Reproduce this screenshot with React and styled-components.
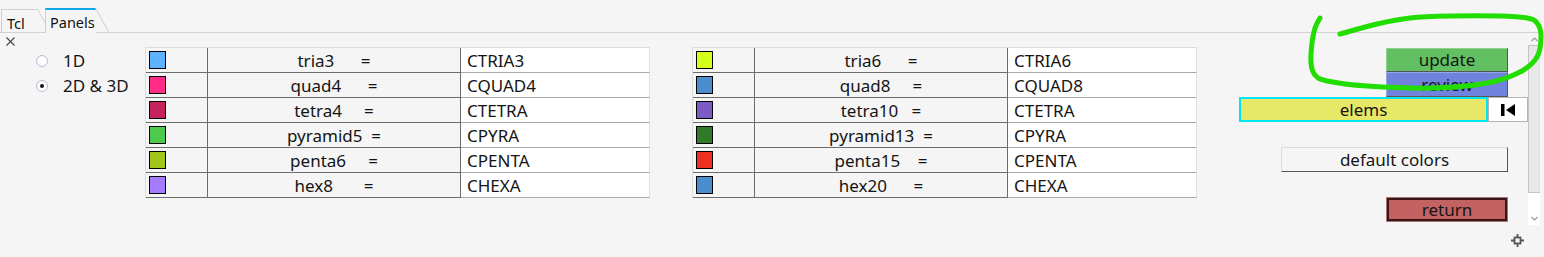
import React from "react";
import styled, { createGlobalStyle } from "styled-components";

const Global = createGlobalStyle`
  html, body { margin: 0; padding: 0; background: #f5f5f5; }
  body { font-family: "Noto Sans", "Open Sans", sans-serif; color: #141414; }
  * { box-sizing: border-box; }
`;

const FS = 17;

const Page = styled.div`
  position: relative;
  width: 1544px;
  height: 257px;
  background: #f5f5f5;
  display: flex;
  flex-direction: column;
  overflow: hidden;
`;

const TabBar = styled.div`
  height: 33px;
  border-bottom: 1px solid #d2d2d2;
  display: flex;
  align-items: flex-end;
  padding-left: 1px;
`;

const Tab = styled.div`
  position: relative;
  height: ${(p) => (p.$active ? 25 : 23)}px;
  margin-bottom: ${(p) => (p.$active ? -1 : 0)}px;
  width: ${(p) => p.$w}px;
  margin-right: ${(p) => p.$gap}px;
  border-left: 1px solid #cfcfcf;
  border-top: ${(p) => (p.$active ? "2px solid #12a6e6" : "1px solid #cfcfcf")};
  background: #f5f5f5;
  font-size: 14.5px;
  line-height: 1;
  padding: ${(p) => (p.$active ? "5px 0 0 4px" : "6px 0 0 5px")};
  color: #111;
  &::after {
    content: "";
    position: absolute;
    top: ${(p) => (p.$active ? -2 : -1)}px;
    right: 0;
    width: 1px;
    height: calc(100% + ${(p) => (p.$active ? 2 : 1)}px);
    background: #cfcfcf;
    transform-origin: top left;
    transform: skewX(29deg);
  }
`;

const Body = styled.div`
  display: flex;
  align-items: flex-start;
`;

const Main = styled.div`
  width: 1528px;
  display: flex;
  flex-direction: column;
`;

const CloseRow = styled.div`
  height: 14px;
  padding: 4px 0 0 6px;
  display: flex;
`;

const PanelRow = styled.div`
  display: flex;
  align-items: flex-start;
  padding-left: 36px;
`;

const Radios = styled.div`
  width: 110px;
  padding-top: 1px;
  display: flex;
  flex-direction: column;
`;

const RadioRow = styled.div`
  height: 25px;
  display: flex;
  align-items: center;
  gap: 15px;
  font-size: ${FS}px;
`;

const RadioCircle = styled.span`
  width: 12px;
  height: 12px;
  border-radius: 50%;
  border: 1px solid #b9bdd6;
  background: radial-gradient(circle at 60% 60%, #ffffff 55%, #e6e8f4 100%);
  display: flex;
  align-items: center;
  justify-content: center;
  &::after {
    content: "";
    width: 4px;
    height: 4px;
    border-radius: 50%;
    background: ${(p) => (p.$checked ? "#111" : "transparent")};
  }
`;

const Table = styled.div`
  width: 505px;
  margin-right: ${(p) => p.$gap}px;
  border-top: 1px solid #dcdcdc;
  border-left: 1px solid #dcdcdc;
  display: flex;
  flex-direction: column;
`;

const Row = styled.div`
  display: grid;
  grid-template-columns: 62px 253px 189px;
  height: 25px;
`;

const ColorCell = styled.div`
  border-right: 1px solid #6c6c6c;
  border-bottom: 1px solid #6c6c6c;
  display: flex;
  align-items: center;
  padding-left: 3px;
`;

const Swatch = styled.span`
  width: 17px;
  height: 18px;
  border: 1px solid #000;
  background: ${(p) => p.$c};
`;

const LabelCell = styled.div`
  border-right: 1px solid #6c6c6c;
  border-bottom: 1px solid #6c6c6c;
  display: flex;
  align-items: center;
  justify-content: center;
  white-space: pre;
  font-size: ${FS}px;
`;

const ValueCell = styled.div`
  background: #fff;
  border-bottom: 1px solid #a9a9a9;
  border-right: 1px solid #e2e2e2;
  display: flex;
  align-items: center;
  padding-left: 6px;
  font-size: ${FS}px;
`;

const RightPanel = styled.div`
  width: 290px;
  padding-top: 1px;
  display: grid;
  grid-template-rows: 24px 25px 25px 25px 25px 25px 25px;
`;

const BtnRow = styled.div`
  display: flex;
  justify-content: ${(p) => (p.$full ? "flex-start" : "flex-end")};
  padding-right: ${(p) => (p.$full ? 0 : 20)}px;
  align-items: stretch;
`;

const Button = styled.div`
  width: ${(p) => p.$w}px;
  background: ${(p) => p.$bg};
  border: 1px solid;
  border-color: ${(p) => p.$light} #555 #555 ${(p) => p.$light};
  display: flex;
  align-items: center;
  justify-content: center;
  font-size: ${FS}px;
  color: #151515;
  padding-bottom: 1px;
`;

const ElemsButton = styled.div`
  width: 249px;
  background: #e8e868;
  border: 2px solid #00e6f0;
  display: flex;
  align-items: center;
  justify-content: center;
  font-size: ${FS}px;
  color: #151515;
`;

const IconButton = styled.div`
  width: 40px;
  background: #fff;
  border: 1px solid #b4b4b4;
  display: flex;
  align-items: center;
  justify-content: center;
`;

const ReturnButton = styled.div`
  width: 122px;
  background: #c26262;
  border: 1px solid #a77676;
  box-shadow: inset 0 0 0 2px #3a1515;
  display: flex;
  align-items: center;
  justify-content: center;
  font-size: ${FS}px;
  color: #151515;
`;

const Scrollbar = styled.div`
  width: 12px;
  margin-top: 4px;
  display: flex;
  flex-direction: column;
`;

const ScrollArrow = styled.div`
  height: ${(p) => p.$h}px;
  display: flex;
  justify-content: center;
  align-items: ${(p) => (p.$down ? "flex-end" : "flex-start")};
  padding-bottom: ${(p) => (p.$down ? 4 : 0)}px;
  background: ${(p) => (p.$down ? "#fff" : "transparent")};
`;

const Thumb = styled.div`
  height: 148px;
  background: #e8e8e8;
  border: 1px solid #c4c4c4;
  border-right-color: #e0e0e0;
`;

const Footer = styled.div`
  display: flex;
  justify-content: flex-end;
  padding: 9px 20px 0 0;
`;

const Overlay = styled.svg`
  position: absolute;
  left: 0;
  top: 0;
  pointer-events: none;
`;

const left = [
  ["#5cb3ff", "tria3      =", "CTRIA3"],
  ["#ff2d85", "quad4      =", "CQUAD4"],
  ["#c4235e", "tetra4     =", "CTETRA"],
  ["#4dc94d", "pyramid5  =", "CPYRA"],
  ["#a3c41a", "penta6     =", "CPENTA"],
  ["#a57cff", "hex8       =", "CHEXA"],
];

const right = [
  ["#d4ff1a", "tria6      =", "CTRIA6"],
  ["#4a8ccc", "quad8     =", "CQUAD8"],
  ["#7c5cc4", "tetra10   =", "CTETRA"],
  ["#317a2a", "pyramid13  =", "CPYRA"],
  ["#ee3020", "penta15    =", "CPENTA"],
  ["#4a8ccc", "hex20      =", "CHEXA"],
];

function ElemTable({ rows, gap }) {
  return (
    <Table $gap={gap}>
      {rows.map(([c, l, v], i) => (
        <Row key={i}>
          <ColorCell>
            <Swatch $c={c} />
          </ColorCell>
          <LabelCell>{l}</LabelCell>
          <ValueCell>{v}</ValueCell>
        </Row>
      ))}
    </Table>
  );
}

const pts = [
  [1320, 18], [1315, 28], [1312, 43], [1311, 63], [1315, 75], [1327, 81],
  [1367, 86], [1433, 88], [1487, 83], [1520, 72], [1537, 57], [1541, 36],
  [1537, 23], [1527, 18], [1500, 16], [1450, 16], [1410, 18], [1377, 24], [1340, 34],
];

function smooth(p) {
  let d = `M${p[0][0]},${p[0][1]}`;
  for (let i = 0; i < p.length - 1; i++) {
    const p0 = p[i - 1] || p[i];
    const p1 = p[i];
    const p2 = p[i + 1];
    const p3 = p[i + 2] || p2;
    const c1 = [p1[0] + (p2[0] - p0[0]) / 6, p1[1] + (p2[1] - p0[1]) / 6];
    const c2 = [p2[0] - (p3[0] - p1[0]) / 6, p2[1] - (p3[1] - p1[1]) / 6];
    d += ` C${c1[0]},${c1[1]} ${c2[0]},${c2[1]} ${p2[0]},${p2[1]}`;
  }
  return d;
}

export default function App() {
  return (
    <Page>
      <Global />
      <TabBar>
        <Tab $w={37} $gap={7}>Tcl</Tab>
        <Tab $w={51} $gap={0} $active>Panels</Tab>
      </TabBar>
      <Body>
        <Main>
          <CloseRow>
            <svg width="9" height="9" viewBox="0 0 9 9">
              <path d="M0.5 0.5 L8.5 8.5 M8.5 0.5 L0.5 8.5" stroke="#444" strokeWidth="1.1" />
            </svg>
          </CloseRow>
          <PanelRow>
            <Radios>
              <RadioRow>
                <RadioCircle />
                1D
              </RadioRow>
              <RadioRow>
                <RadioCircle $checked />
                2D &amp; 3D
              </RadioRow>
            </Radios>
            <ElemTable rows={left} gap={42} />
            <ElemTable rows={right} gap={42} />
            <RightPanel>
              <BtnRow>
                <Button $w={122} $bg="#62c062" $light="#8fd08f">update</Button>
              </BtnRow>
              <BtnRow>
                <Button $w={122} $bg="#6f82dc" $light="#98a6e6">review</Button>
              </BtnRow>
              <BtnRow $full>
                <ElemsButton>elems</ElemsButton>
                <IconButton>
                  <svg width="14" height="12" viewBox="0 0 14 12">
                    <rect x="0" y="0" width="3.5" height="12" fill="#000" />
                    <polygon points="14,0 14,12 5,6" fill="#000" />
                  </svg>
                </IconButton>
              </BtnRow>
              <BtnRow />
              <BtnRow>
                <Button $w={227} $bg="#f5f5f5" $light="#dcdcdc">default colors</Button>
              </BtnRow>
              <BtnRow />
              <BtnRow>
                <ReturnButton>return</ReturnButton>
              </BtnRow>
            </RightPanel>
          </PanelRow>
        </Main>
        <Scrollbar>
          <ScrollArrow $h={8}>
            <svg width="7" height="5" viewBox="0 0 7 5">
              <path d="M0.5 4 L3.5 1 L6.5 4" stroke="#9a9a9a" strokeWidth="1.2" fill="none" />
            </svg>
          </ScrollArrow>
          <Thumb />
          <ScrollArrow $h={32} $down>
            <svg width="7" height="5" viewBox="0 0 7 5">
              <path d="M0.5 1 L3.5 4 L6.5 1" stroke="#9a9a9a" strokeWidth="1.2" fill="none" />
            </svg>
          </ScrollArrow>
        </Scrollbar>
      </Body>
      <Footer>
        <svg width="13" height="13" viewBox="0 0 13 13">
          <rect x="3.5" y="3.5" width="6" height="6" stroke="#555" strokeWidth="1.8" fill="none" />
          <path d="M6.5 0 V3 M6.5 10 V13 M0 6.5 H3 M10 6.5 H13" stroke="#555" strokeWidth="1.8" />
        </svg>
      </Footer>
      <Overlay width="1544" height="257" viewBox="0 0 1544 257">
        <path d={smooth(pts)} stroke="#22dd00" strokeWidth="5" fill="none" strokeLinecap="round" strokeLinejoin="round" />
      </Overlay>
    </Page>
  );
}
